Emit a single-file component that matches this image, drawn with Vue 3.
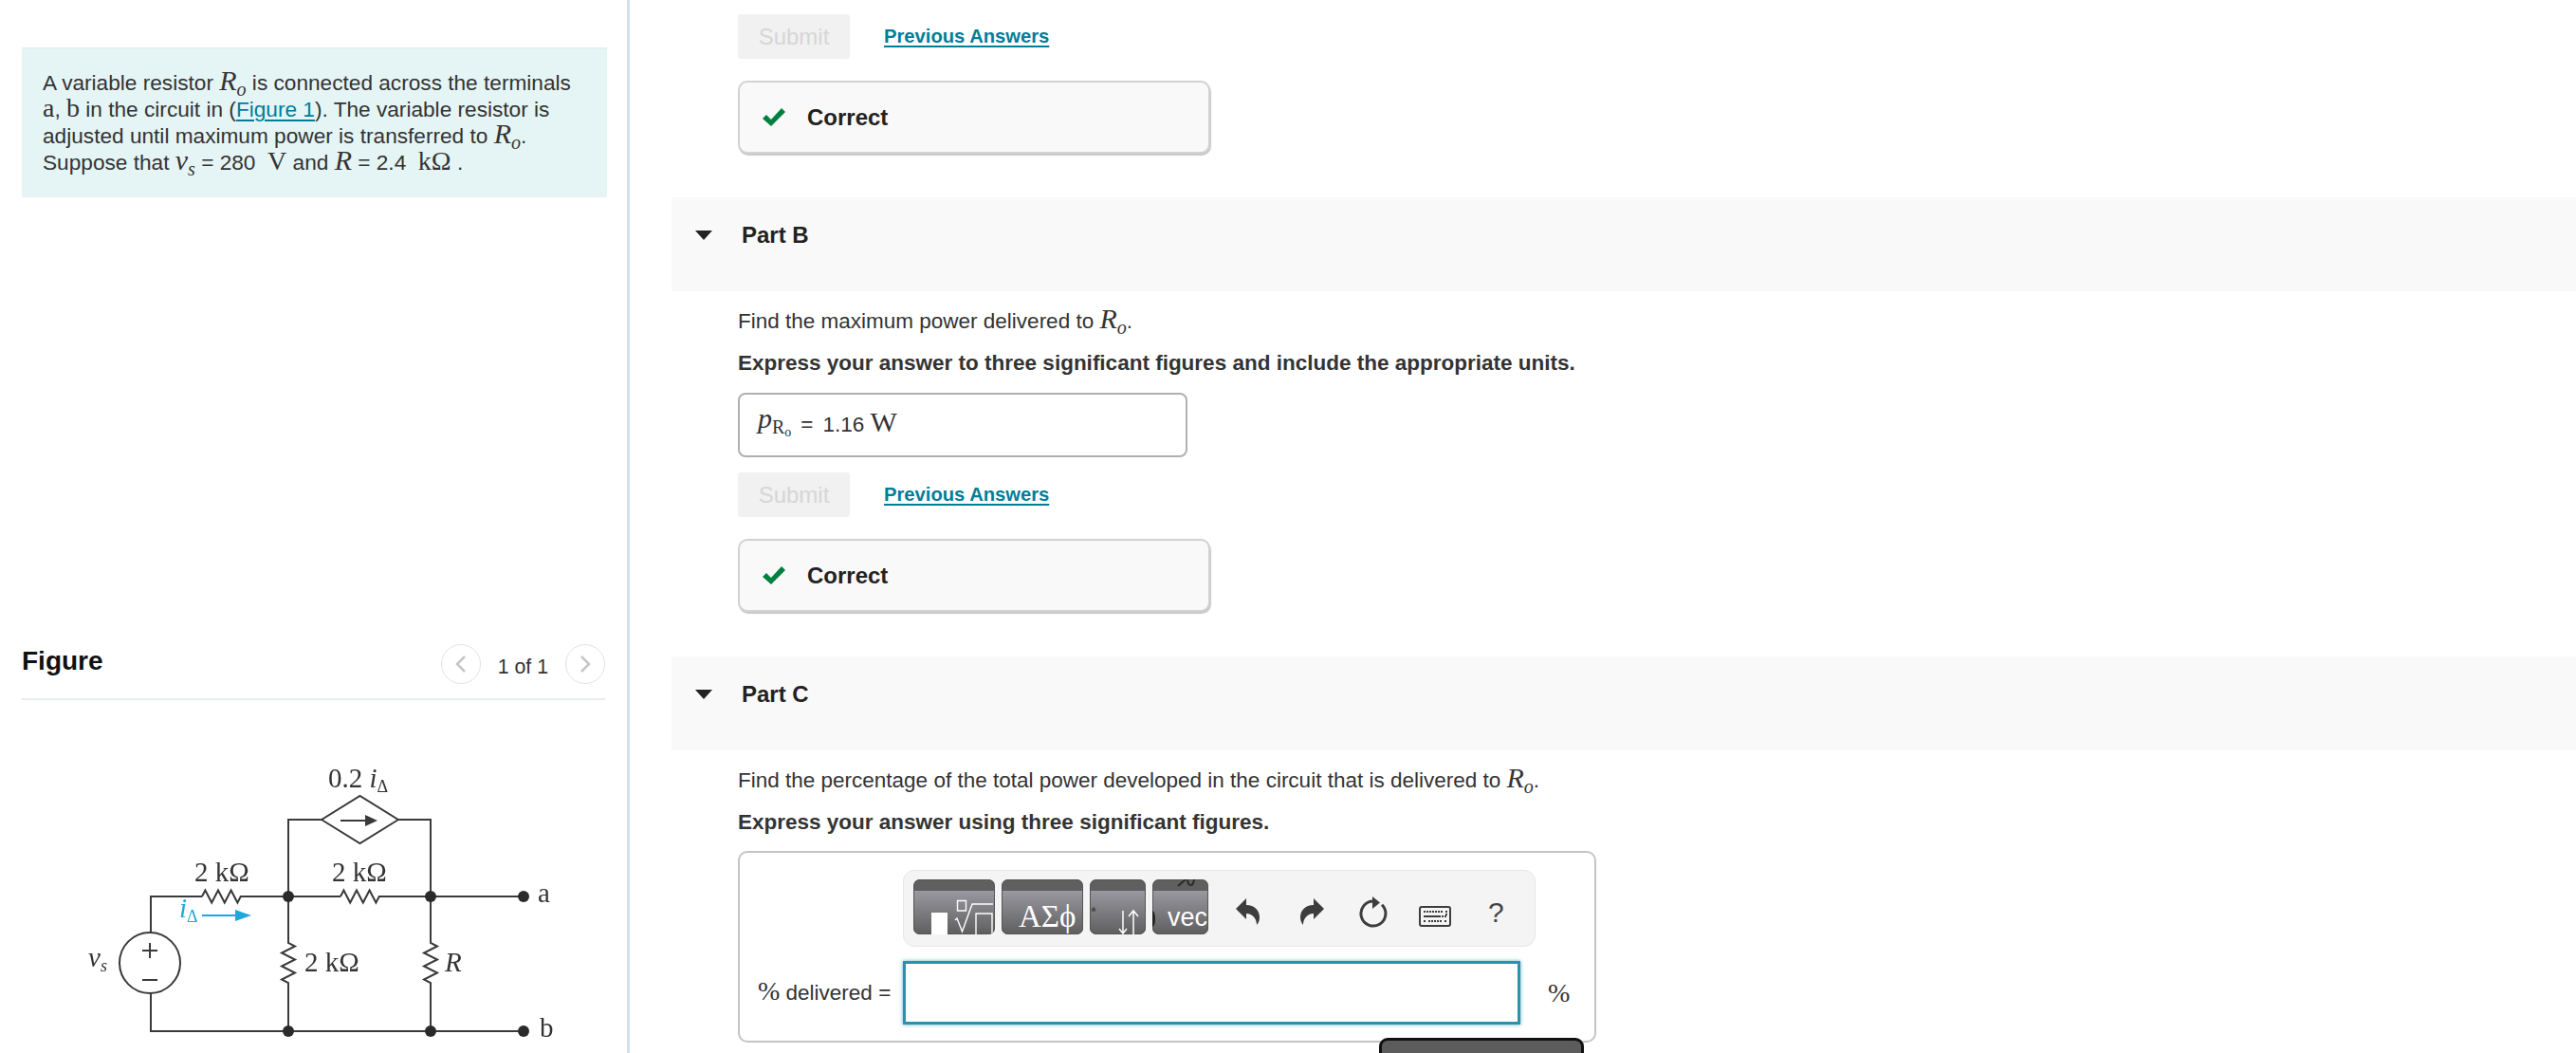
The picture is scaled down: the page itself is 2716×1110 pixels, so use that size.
<script setup>
const hz = 'l3.4 -6.5 l6.8 13 l6.8 -13 l6.8 13 l6.8 -13 l6.8 13 l3.4 -6.5'
const vt = 'l7 3.5 l-14 7 l14 7 l-14 7 l14 7 l-14 7 l7 3.5'
const nodes = [[304, 943], [454, 943], [304, 1085], [454, 1085], [552, 943], [552, 1085]]
</script>

<template>
  <div class="page">
    <aside class="left">
      <div class="intro">
        A variable resistor <span class="m">R<sub>o</sub></span> is connected across the terminals<br />
        <span class="r">a</span>, <span class="r">b</span> in the circuit in (<a class="fig">Figure 1</a>). The variable resistor is<br />
        adjusted until maximum power is transferred to <span class="m">R<sub>o</sub></span>.<br />
        Suppose that <span class="m">v<sub>s</sub></span> = 280 &nbsp;<span class="r">V</span> and <span class="m">R</span> = 2.4 &nbsp;<span class="r">kΩ</span> .
      </div>
      <div class="fig-head">
        <h2>Figure</h2>
        <div class="pager">
          <span class="circle"><svg width="14" height="22" viewBox="0 0 14 22"><path d="M11 3 3 11l8 8" /></svg></span>
          <span class="count">1 of 1</span>
          <span class="circle"><svg width="14" height="22" viewBox="0 0 14 22"><path d="M3 3l8 8-8 8" /></svg></span>
        </div>
      </div>
      <svg class="circuit" width="640" height="374" viewBox="0 736 640 374">
        <g fill="none" stroke="#3a3a3a" stroke-width="2">
          <path d="M159 981V943H213" />
          <path :d="`M213 943${hz}H304`" />
          <path d="M304 943H359" />
          <path :d="`M359 943${hz}H454`" />
          <path d="M454 943H552" />
          <path d="M159 1045V1085H552" />
          <path d="M304 943V862H339L379.5 837 420 862H454V943" />
          <path d="M339 862 379.5 887 420 862" />
          <path :d="`M304 943V992${vt}V1085`" />
          <path :d="`M454 943V992${vt}V1085`" />
          <circle cx="158" cy="1013" r="32" />
          <path d="M150 1000h16M158 992v16M150 1031h16" />
          <path d="M359 863h28" />
        </g>
        <path d="M385 857l13 6-13 6z" fill="#3a3a3a" />
        <circle v-for="n in nodes" :key="n[0] + '-' + n[1]" :cx="n[0]" :cy="n[1]" r="6" fill="#2a2a2a" />
        <path d="M213 963h40" stroke="#1ea7de" stroke-width="2" fill="none" />
        <path d="M248 957l17 6-17 6z" fill="#1ea7de" />
        <g class="ct">
          <text x="346" y="828">0.2 <tspan class="it">i</tspan><tspan class="subt" dy="5">Δ</tspan></text>
          <text x="205" y="927">2 kΩ</text>
          <text x="350" y="927">2 kΩ</text>
          <text x="321" y="1022">2 kΩ</text>
          <text x="469" y="1022" class="it">R</text>
          <text x="93" y="1017" class="it">v<tspan class="subt" dy="5">s</tspan></text>
          <text x="567" y="949">a</text>
          <text x="569" y="1091">b</text>
          <text x="189" y="965" class="blue"><tspan class="it">i</tspan><tspan class="subt" dy="5">Δ</tspan></text>
        </g>
      </svg>
    </aside>

    <main class="right">
      <div class="sec first">
        <div class="actions">
          <button class="submit">Submit</button>
          <a class="prev">Previous Answers</a>
        </div>
        <div class="feedback">
          <svg width="24" height="20" viewBox="0 0 24 20"><path d="M0 11l4-4 5 5L20 0l4 4L9 19z" fill="#00803e" /></svg>
          <span>Correct</span>
        </div>
      </div>

      <div class="bar">
        <span class="tri"></span>
        <span>Part B</span>
      </div>
      <div class="sec">
        <p class="q">Find the maximum power delivered to <span class="m">R<sub>o</sub></span>.</p>
        <p class="ins">Express your answer to three significant figures and include the appropriate units.</p>
        <div class="answer">
          <span class="m pr">p<sub>R<sub>o</sub></sub></span>
          <span class="eq">=</span>
          <span>1.16 <span class="r w">W</span></span>
        </div>
        <div class="actions second">
          <button class="submit">Submit</button>
          <a class="prev">Previous Answers</a>
        </div>
        <div class="feedback">
          <svg width="24" height="20" viewBox="0 0 24 20"><path d="M0 11l4-4 5 5L20 0l4 4L9 19z" fill="#00803e" /></svg>
          <span>Correct</span>
        </div>
      </div>

      <div class="bar second-bar">
        <span class="tri"></span>
        <span>Part C</span>
      </div>
      <div class="sec">
        <p class="q">Find the percentage of the total power developed in the circuit that is delivered to <span class="m">R<sub>o</sub></span>.</p>
        <p class="ins">Express your answer using three significant figures.</p>
        <div class="editor">
          <div class="toolbar">
            <div class="tool w86">
              <svg width="86" height="46" viewBox="0 0 86 46">
                <rect x="19" y="23" width="17" height="23" fill="#fff" />
                <path d="M46.500 10.500h9v10.500h-9z M44 31l2-2 5.500 14L62 14h22M66 46V24h17v22" fill="none" stroke="#fff" stroke-width="1.400" />
              </svg>
            </div>
            <div class="tool w86"><span class="greek">ΑΣϕ</span></div>
            <div class="tool w59">
              <span class="star">*</span>
              <svg width="59" height="46" viewBox="0 0 59 46">
                <path d="M35 21v24M31 40l4 5 4-5M46 46V21M41 27l5-6 5 6" fill="none" stroke="#fff" stroke-width="1.500" />
              </svg>
            </div>
            <div class="tool w59">
              <svg class="peek" width="59" height="12" viewBox="0 0 59 12">
                <path d="M27 7l8-7M37 0q0 6 4 6 2 0 3-6" fill="none" stroke="#2a2a2a" stroke-width="2" />
              </svg>
              <span class="paren"></span>
              <span class="vec">vec</span>
            </div>
            <svg class="act undo" width="25" height="28" viewBox="0 0 25 28"><path d="M0 11 11 0v7c9 0 14 6 14 13 0 3-1 6-3 8 0-6-4-12-11-12v6z" fill="#3d3d3d" /></svg>
            <svg class="act redo" width="25" height="28" viewBox="0 0 25 28"><path d="M25 11 14 0v7C5 7 0 13 0 20c0 3 1 6 3 8 0-6 4-12 11-12v6z" fill="#3d3d3d" /></svg>
            <svg class="act reload" width="30" height="34" viewBox="0 0 30 34"><path d="M15 5A13 13 0 1 0 24 8.700" fill="none" stroke="#3d3d3d" stroke-width="3" /><path d="M14 0l8 6.500-8 6.500z" fill="#3d3d3d" /></svg>
            <svg class="act kbd" width="34" height="22" viewBox="0 0 34 22">
              <rect x="1" y="1" width="32" height="20" rx="2" fill="#f4f4f4" stroke="#3d3d3d" stroke-width="2" />
              <path d="M5 6h20M29 5v6H5M5 11h18M5 16h3M10 16h14M27 16h2" stroke="#3d3d3d" stroke-width="2" stroke-dasharray="2 1" fill="none" />
            </svg>
            <span class="help">?</span>
          </div>
          <div class="inputrow">
            <span class="lab"><span class="r">%</span> delivered =</span>
            <div class="box"></div>
            <span class="r unit">%</span>
          </div>
        </div>
      </div>
      <div class="tip"></div>
    </main>
  </div>
</template>

<style>
html, body { margin: 0; background: #fff; overflow: hidden; }
</style>

<style scoped>
.page {
  display: flex;
  width: 2716px;
  height: 1110px;
  overflow: hidden;
  background: #fff;
  color: #333;
  font: 22.5px/28px "Liberation Sans", Arial, sans-serif;
}
.left {
  box-sizing: border-box;
  width: 664px;
  flex: none;
  padding: 50px 21px 0 23px;
  border-right: 3px solid #d3e1ef;
}
.intro {
  box-sizing: border-box;
  height: 158px;
  padding: 22px 22px;
  background: #e5f5f5;
  border-top: 1px solid #e3ebeb;
  white-space: nowrap;
  font-size: 22.65px;
}
.m { font: italic 30px/0 "Liberation Serif", serif; }
.m sub { font-size: 20px; line-height: 0; vertical-align: -6px; }
.m sub sub { font-size: 14px; vertical-align: -3px; }
.r { font: 28px/0 "Liberation Serif", serif; }
.w { font-size: 30px; }
.fig { color: #007d99; text-decoration: underline; text-decoration-thickness: 2px; text-underline-offset: 3px; }
.fig-head {
  display: flex;
  justify-content: space-between;
  align-items: center;
  height: 58px;
  margin: 470px 2px 0 0;
  border-bottom: 2px solid #e8ecef;
}
.fig-head h2 { margin: -20px 0 0; font-size: 28px; font-weight: 700; color: #111; line-height: 32px; }
.pager { display: flex; align-items: center; gap: 18px; margin-top: -14px; }
.circle {
  box-sizing: border-box;
  width: 42px;
  height: 42px;
  border-radius: 50%;
  border: 1px solid #e3e3e3;
  display: flex;
  align-items: center;
  justify-content: center;
}
.circle path { fill: none; stroke: #c6c6c6; stroke-width: 2.5; }
.count { color: #333; margin-top: 6px; font-size: 21.3px; }
.circuit { display: block; margin: 0 0 0 -23px; filter: blur(0.4px); }
.ct { font: 29px "Liberation Serif", serif; fill: #333; }
.ct .it { font-style: italic; }
.ct .subt { font-size: 18px; }
.ct .blue { fill: #1ea7de; }

.right { position: relative; flex: 1; padding: 15px 0 0 44px; min-width: 0; }
.sec { padding-left: 70px; }
.sec p { margin: 0; line-height: 28px; }
.actions { display: flex; align-items: center; gap: 36px; height: 47px; }
.actions.second { margin-top: 16px; }
.submit {
  box-sizing: border-box;
  width: 118px;
  height: 47px;
  border: 0;
  border-radius: 3px;
  background: #f1f1f1;
  color: #d6d6d6;
  font: 24px "Liberation Sans", sans-serif;
  padding: 0;
}
.prev { color: #007d99; font-weight: 700; font-size: 20.2px; margin-top: -1px; text-decoration: underline; text-decoration-thickness: 2px; text-underline-offset: 3px; }
.feedback {
  box-sizing: border-box;
  display: flex;
  align-items: center;
  gap: 23px;
  width: 498px;
  height: 77px;
  margin-top: 23px;
  padding: 0 0 0 24px;
  background: #f9f9f9;
  border: 2px solid #d2d2d2;
  border-radius: 10px;
  box-shadow: 1px 2px 1px #c8c8c8;
  color: #222;
  font-size: 24px;
  font-weight: 700;
}
.bar {
  display: flex;
  align-items: center;
  height: 99px;
  margin-top: 46px;
  padding: 0 0 19px 25px;
  box-sizing: border-box;
  background: #f9f9f9;
  color: #222;
  font-size: 24px;
  font-weight: 700;
  gap: 31px;
}
.second-bar { margin-top: 47px; }
.tri { width: 0; height: 0; border: 9px solid transparent; border-top: 10px solid #222; border-bottom: 0; }
.q { margin-top: 18px !important; color: #333; }
.ins { margin-top: 16px !important; font-weight: 700; color: #333; }
.answer {
  box-sizing: border-box;
  display: flex;
  align-items: center;
  width: 474px;
  height: 68px;
  margin-top: 17px;
  padding: 0 0 0 19px;
  border: 2px solid #b0b0b0;
  border-radius: 8px;
}
.eq { margin: 0 10px 0 10px; }
.pr sub { font-style: normal; font-size: 20px; }
.editor {
  position: relative;
  box-sizing: border-box;
  width: 905px;
  height: 202px;
  margin-top: 16px;
  border: 2px solid #c4c4c4;
  border-radius: 10px;
  padding: 18px 0 0 172px;
}
.toolbar {
  box-sizing: border-box;
  display: flex;
  align-items: center;
  width: 667px;
  height: 81px;
  padding: 0 0 0 10px;
  gap: 7px;
  background: #f4f4f4;
  border: 1px solid #e6e6e6;
  border-radius: 12px;
}
.tool {
  position: relative;
  flex: none;
  box-sizing: border-box;
  height: 58px;
  margin-top: -3px;
  border-radius: 7px;
  overflow: hidden;
  background: linear-gradient(#5f5f5f 0 12px, #9a98a0 12px, #5e5e5e 100%);
  box-shadow: inset 0 0 0 1px #555;
  color: #fff;
}
.w86 { width: 86px; }
.w59 { width: 59px; }
.tool svg { position: absolute; left: 0; top: 12px; }
.tool svg.peek { top: 0; }
.greek { position: absolute; left: 18px; bottom: 1px; font: 33px/36px "Liberation Serif", serif; }
.star { position: absolute; left: 1px; top: 26px; font: 15px/15px "Liberation Sans", sans-serif; color: #333; }
.paren { position: absolute; left: -3px; top: 33px; width: 6px; height: 17px; border-radius: 50%; background: #222; }
.vec { position: absolute; left: 16px; bottom: 3px; font: 27px/30px "Liberation Sans", sans-serif; white-space: nowrap; }
.act { flex: none; }
.undo { margin: 7px 0 0 22px; }
.redo { margin: 7px 0 0 36px; }
.reload { margin: 9px 0 0 30px; }
.kbd { margin: 16px 0 0 26px; }
.help { margin: 8px 0 0 32px; font-size: 30px; color: #444; }
.inputrow { display: flex; align-items: center; margin-top: 15px; }
.lab { position: absolute; left: 19px; white-space: nowrap; }
.box {
  box-sizing: border-box;
  width: 651px;
  height: 67px;
  background: #fff;
  border: 3px solid #2b91ad;
  box-shadow: 0 0 4px #5fb0c6;
}
.unit { margin-left: 29px; }
.tip {
  position: absolute;
  left: 790px;
  top: 1094px;
  box-sizing: border-box;
  width: 216px;
  height: 40px;
  background: #5c5c5c;
  border: 3px solid #111;
  border-radius: 9px;
}
</style>
